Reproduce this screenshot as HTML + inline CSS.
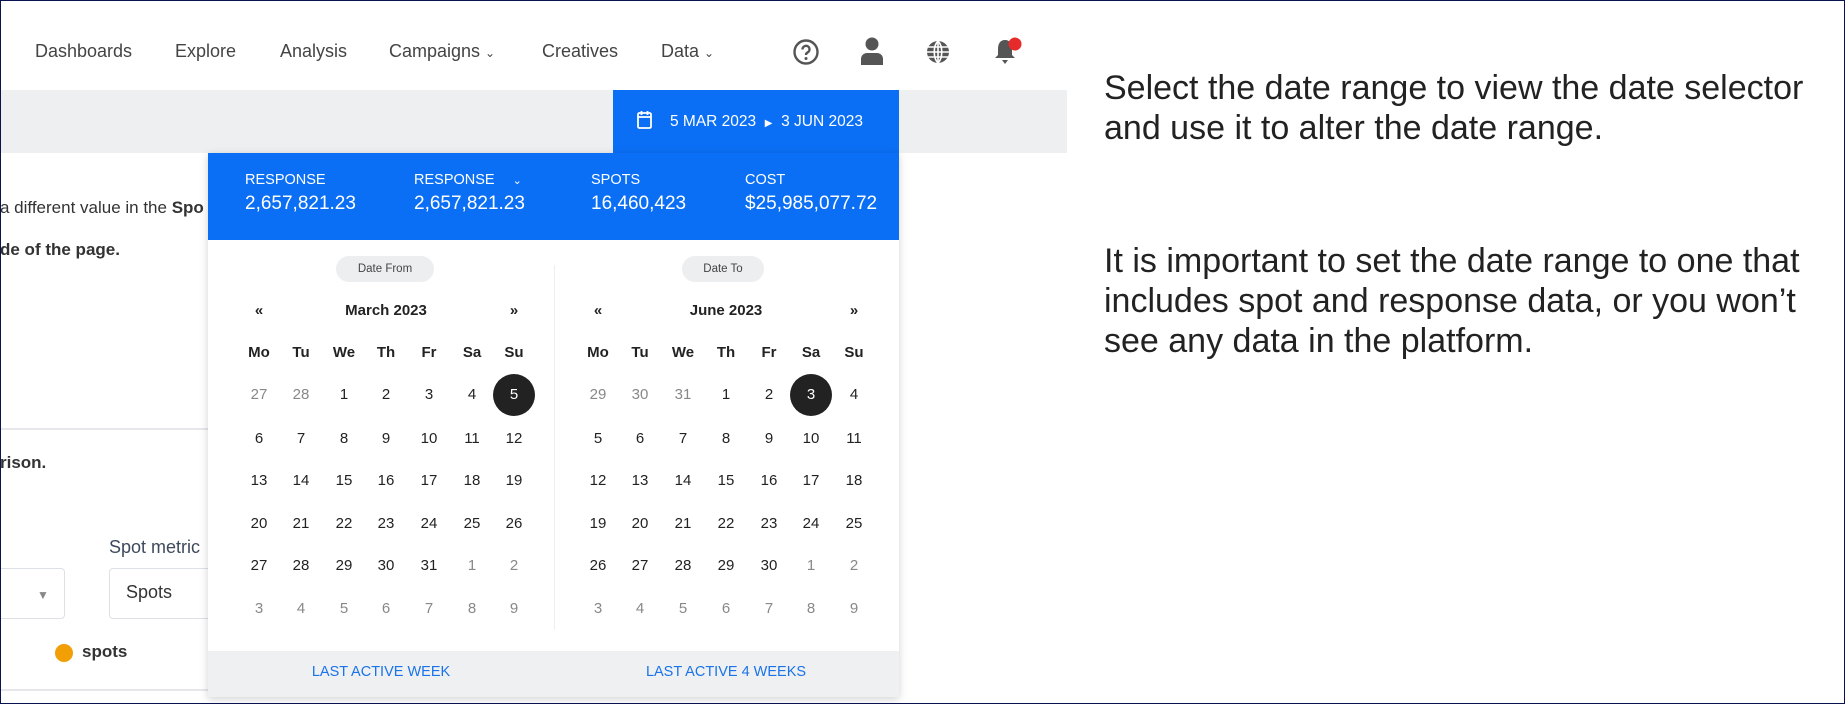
<!DOCTYPE html>
<html><head><meta charset="utf-8"><style>
*{margin:0;padding:0;box-sizing:border-box}
body{width:1845px;height:704px;position:relative;overflow:hidden;background:#fff;font-family:"Liberation Sans",sans-serif;color:#333}
.frame{position:absolute;left:0;top:0;width:1845px;height:704px;border:1.5px solid #0b1250;z-index:50;pointer-events:none}
.a{position:absolute;white-space:nowrap}
.nav{top:41px;font-size:18px;color:#444}
.band{position:absolute;left:0;top:90px;width:1067px;height:63px;background:#eeeff1}
.tab{position:absolute;left:613px;top:90px;width:286px;height:63px;background:#0a6ff5}
.pop{position:absolute;left:208px;top:153px;width:691px;height:544px;background:#fff;box-shadow:0 2px 8px rgba(0,0,0,.18)}
.head{position:absolute;left:0;top:0;width:691px;height:87px;background:#0a6ff5;color:#fff}
.lbl{font-size:14.5px;top:19px}
.val{font-size:19px;top:40px}
.pill{position:absolute;top:103px;height:26px;border-radius:13px;background:#eceef0;font-size:11.5px;color:#444;text-align:center;line-height:26px}
.d{position:absolute;width:42px;text-align:center;font-size:15px;color:#222;transform:translate(-21px,-9px)}
.g{color:#888}
.h{font-weight:bold}
.sel{background:#222;color:#fff;border-radius:50%;width:42px;height:42px;line-height:42px;transform:translate(-21px,-21px)}
.foot{position:absolute;left:0;top:498px;width:691px;height:46px;background:#eef0f2;color:#1a73e8;font-size:14.5px}
.rt{position:absolute;left:1104px;font-size:34px;color:#222;line-height:40px}
</style></head><body>
<div class="frame"></div>
<div class="a nav" style="left:35px">Dashboards</div>
<div class="a nav" style="left:175px">Explore</div>
<div class="a nav" style="left:280px">Analysis</div>
<div class="a nav" style="left:389px">Campaigns <span style="font-size:12px">&#8964;</span></div>
<div class="a nav" style="left:542px">Creatives</div>
<div class="a nav" style="left:661px">Data <span style="font-size:12px">&#8964;</span></div>
<svg class="a" style="left:792px;top:38px" width="28" height="28" viewBox="0 0 28 28"><circle cx="14" cy="14" r="11.5" fill="none" stroke="#555" stroke-width="2.4"/><path d="M10.5 11.5a3.5 3.5 0 1 1 5 3c-1.2.6-1.5 1.2-1.5 2.5" fill="none" stroke="#555" stroke-width="2.4"/><circle cx="14" cy="20.5" r="1.5" fill="#555"/></svg>
<svg class="a" style="left:859px;top:36px" width="26" height="30" viewBox="0 0 26 30"><circle cx="13" cy="8" r="6.5" fill="#555"/><path d="M2 29v-6a6 6 0 0 1 6-6h10a6 6 0 0 1 6 6v6z" fill="#555"/></svg>
<svg class="a" style="left:925px;top:39px" width="26" height="26" viewBox="0 0 26 26"><circle cx="13" cy="13" r="11" fill="#555"/><path d="M13 2v22M2 13h22M3 8h20M3 18h20M13 2c-5 5-5 17 0 22M13 2c5 5 5 17 0 22" stroke="#fff" stroke-width="1.6" fill="none"/></svg>
<svg class="a" style="left:990px;top:36px" width="34" height="32" viewBox="0 0 34 32"><path d="M15 4c-5 0-7 4-7 9v6l-3 3h20l-3-3v-6c0-5-2-9-7-9z" fill="#555"/><path d="M12 24h6l-3 4z" fill="#555"/><circle cx="25" cy="8" r="6.5" fill="#e52b2b"/></svg>
<div class="band"></div>
<div class="tab">
<svg class="a" style="left:24px;top:20px" width="15" height="19" viewBox="0 0 15 19"><rect x="1" y="3" width="13" height="15" rx="1.5" fill="none" stroke="#fff" stroke-width="1.8"/><path d="M1 7h13M4.5 1v4M10.5 1v4" stroke="#fff" stroke-width="1.8"/></svg>
<div class="a" style="left:57px;top:23px;color:#fff;font-size:15.5px">5 MAR 2023 &nbsp;<span style="font-size:10px">&#9654;</span>&nbsp; 3 JUN 2023</div>
</div>
<div class="a" style="left:0;top:198px;font-size:17px;color:#333">a different value in the <b>Spo</b></div>
<div class="a" style="left:0;top:240px;font-size:17px;font-weight:bold;color:#333">de of the page.</div>
<div class="a" style="left:0;top:428px;width:208px;height:2px;background:#e5e7ea"></div>
<div class="a" style="left:0;top:453px;font-size:17px;font-weight:bold;color:#333">rison.</div>
<div class="a" style="left:109px;top:537px;font-size:18px;color:#3d4a5c">Spot metric</div>
<div class="a" style="left:-5px;top:568px;width:70px;height:51px;border:1.5px solid #dde0e4;border-radius:4px"></div>
<div class="a" style="left:37px;top:588px;font-size:12px;color:#888">&#9660;</div>
<div class="a" style="left:109px;top:568px;width:120px;height:51px;border:1.5px solid #dde0e4;border-radius:4px"></div>
<div class="a" style="left:126px;top:582px;font-size:18px;color:#333">Spots</div>
<div class="a" style="left:55px;top:644px;width:18px;height:18px;border-radius:50%;background:#f29f05"></div>
<div class="a" style="left:82px;top:642px;font-size:17px;font-weight:bold;color:#333">spots</div>
<div class="a" style="left:0;top:689px;width:208px;height:2px;background:#e5e7ea"></div>
<div class="pop">
<div class="head">
<div class="a lbl" style="left:37px">RESPONSE</div><div class="a val" style="left:37px">2,657,821.23</div>
<div class="a lbl" style="left:206px">RESPONSE <span style="margin-left:14px;font-size:11px">&#8964;</span></div><div class="a val" style="left:206px">2,657,821.23</div>
<div class="a lbl" style="left:383px">SPOTS</div><div class="a val" style="left:383px">16,460,423</div>
<div class="a lbl" style="left:537px">COST</div><div class="a val" style="left:537px">$25,985,077.72</div>
</div>
<div class="pill" style="left:128px;width:98px">Date From</div>
<div class="pill" style="left:474px;width:82px">Date To</div>
<div class="a" style="left:346px;top:112px;width:1px;height:365px;background:#eceef0"></div>
<div id="cal"></div>
<div class="foot"><div class="a" style="left:173px;top:13px;transform:translateX(-50%)">LAST ACTIVE WEEK</div><div class="a" style="left:518px;top:13px;transform:translateX(-50%)">LAST ACTIVE 4 WEEKS</div></div>
</div>
<div class="rt" style="top:68px">Select the date range to view the date selector<br>and use it to alter the date range.</div>
<div class="rt" style="top:241px">It is important to set the date range to one that<br>includes spot and response data, or you won’t<br>see any data in the platform.</div>
<script>
(function(){
var c=document.getElementById('cal'),h='';
var L=[51,93,136,178,221,264,306],R=[390,432,475,518,561,603,646],Y=[200,242,286,328,371,413,456];
function cell(x,y,t,cls){h+='<div class="d '+cls+'" style="left:'+x+'px;top:'+y+'px">'+t+'</div>';}
var dn=['Mo','Tu','We','Th','Fr','Sa','Su'];
function month(X,name,days,selIdx){
 cell(X[0],158,'&laquo;','h');cell(X[6],158,'&raquo;','h');
 h+='<div class="a h" style="left:'+X[3]+'px;top:149px;transform:translateX(-50%);font-size:15px;color:#222">'+name+'</div>';
 for(var i=0;i<7;i++)cell(X[i],Y[0],dn[i],'h');
 for(var k=0;k<42;k++){var d=days[k];cell(X[k%7],Y[1+Math.floor(k/7)],d[0],(d[1]?'g':'')+(k==selIdx?' sel':''));}
}
function gen(prev,start,len,pl){var a=[];for(var i=0;i<pl;i++)a.push([prev-pl+1+i,1]);for(var d=1;d<=len;d++)a.push([d,0]);var n=1;while(a.length<42)a.push([n++,1]);return a;}
month(L,'March 2023',gen(28,1,31,2),6);
month(R,'June 2023',gen(31,1,30,3),5);
c.innerHTML=h;
})();
</script>
</body></html>
